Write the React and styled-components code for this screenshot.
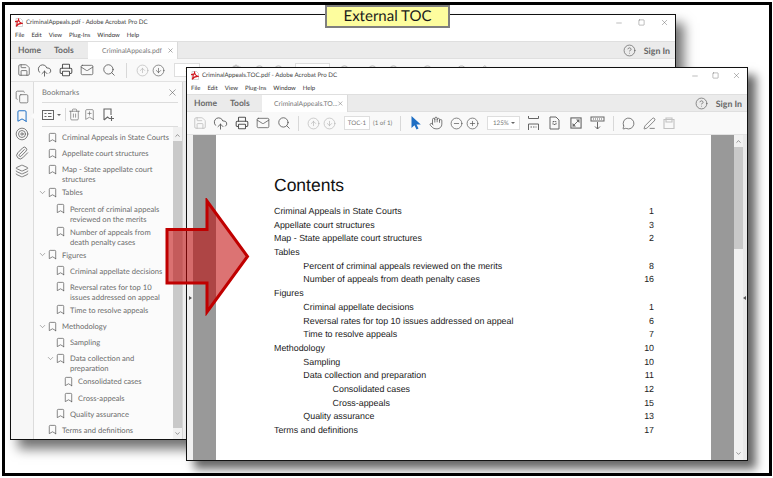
import React from 'react'
import styled, { createGlobalStyle } from 'styled-components'
import {
    Save, CloudUpload, Printer, Mail, Search, CircleArrowUp, CircleArrowDown, Hand, CircleMinus, CirclePlus,
    MessageCircle, PenLine, CircleHelp, X, Minus, Square, Copy, Bookmark, Target, Paperclip, Layers,
    Trash2, ChevronDown, ChevronUp, BookmarkPlus,
} from 'lucide-react'

// the bookmark tree
const bookmarks = [
    { level: 0, text: 'Criminal Appeals in State Courts' },
    { level: 0, text: 'Appellate court structures' },
    { level: 0, text: 'Map - State appellate court structures' },
    { level: 0, text: 'Tables', open: true },
    { level: 1, text: 'Percent of criminal appeals reviewed on the merits' },
    { level: 1, text: 'Number of appeals from death penalty cases' },
    { level: 0, text: 'Figures', open: true },
    { level: 1, text: 'Criminal appellate decisions' },
    { level: 1, text: 'Reversal rates for top 10 issues addressed on appeal' },
    { level: 1, text: 'Time to resolve appeals' },
    { level: 0, text: 'Methodology', open: true },
    { level: 1, text: 'Sampling' },
    { level: 1, text: 'Data collection and preparation', open: true },
    { level: 2, text: 'Consolidated cases' },
    { level: 2, text: 'Cross-appeals' },
    { level: 1, text: 'Quality assurance' },
    { level: 0, text: 'Terms and definitions' },
]

// the table of contents
const contents = [
    { level: 0, text: 'Criminal Appeals in State Courts', page: 1 },
    { level: 0, text: 'Appellate court structures', page: 3 },
    { level: 0, text: 'Map - State appellate court structures', page: 2 },
    { level: 0, text: 'Tables' },
    { level: 1, text: 'Percent of criminal appeals reviewed on the merits', page: 8 },
    { level: 1, text: 'Number of appeals from death penalty cases', page: 16 },
    { level: 0, text: 'Figures' },
    { level: 1, text: 'Criminal appellate decisions', page: 1 },
    { level: 1, text: 'Reversal rates for top 10 issues addressed on appeal', page: 6 },
    { level: 1, text: 'Time to resolve appeals', page: 7 },
    { level: 0, text: 'Methodology', page: 10 },
    { level: 1, text: 'Sampling', page: 10 },
    { level: 1, text: 'Data collection and preparation', page: 11 },
    { level: 2, text: 'Consolidated cases', page: 12 },
    { level: 2, text: 'Cross-appeals', page: 15 },
    { level: 1, text: 'Quality assurance', page: 13 },
    { level: 0, text: 'Terms and definitions', page: 17 },
]

const menus = ['File', 'Edit', 'View', 'Plug-Ins', 'Window', 'Help']

// the little pdf badge in the title bars
const PdfIcon = () => (
    <svg width="8" height="9" viewBox="0 0 8 9">
        <path d="M1 .5h4.5L7.5 2.5v6H1z" fill="#fff" stroke="#b9b9b9" strokeWidth=".6" />
        <path d="M0 3.5c3 .8 4-1 3.4-3 .2 2.6 1.4 4.6 4.4 5-2.6-.4-5 .4-6.6 3 1-2.4 1.2-4 1-5.4z" fill="none" stroke="#d0181f" strokeWidth="1.1" />
    </svg>
)

// the toolbar tools that no package has
const SplitIcon = () => (
    <svg width="13" height="14" viewBox="0 0 13 14" fill="none" stroke="#666" strokeWidth="1">
        <path d="M1.500 0v2.500h10V0M1.500 14v-6h10v6" />
        <path d="M3.500 11h6" strokeDasharray="1.500 1" />
    </svg>
)

const FitPageIcon = () => (
    <svg width="13" height="14" viewBox="0 0 13 14" fill="none" stroke="#666" strokeWidth="1">
        <path d="M2 1h6l3 3v9H2z" />
        <path d="M5 5.500h3v3H5z" strokeDasharray="1.500 .7" />
    </svg>
)

const FullScreenIcon = () => (
    <svg width="12" height="12" viewBox="0 0 13 13" fill="none" stroke="#666" strokeWidth="1.200">
        <rect x="1" y="1" width="11" height="11" />
        <path d="M3 10l7-7" strokeWidth="1" />
        <path d="M6.500 2.800h3.700v3.700zM2.800 6.500v3.700h3.700z" fill="#666" stroke="none" />
    </svg>
)

const ReadModeIcon = () => (
    <svg width="15" height="14" viewBox="0 0 15 14" fill="none" stroke="#666" strokeWidth="1">
        <rect x="1" y="1" width="13" height="4" />
        <path d="M3 3h9" strokeDasharray="1 1" />
        <path d="M7.500 6v7M5 10.500l2.500 2.500 2.500-2.500" />
    </svg>
)

const CursorIcon = () => (
    <svg width="11" height="14" viewBox="0 0 11 14">
        <path d="M1.500 0v12l3-2.800 2 4.300 2-.9-2-4.100h4.300z" fill="#1f6fc4" />
    </svg>
)

const StampIcon = () => (
    <svg width="12" height="13" viewBox="0 0 12 13" fill="none" stroke="#c2c2c2" strokeWidth="1.100">
        <path d="M1 2.500h10v9H1zM3 1h6v4H3z" />
    </svg>
)

const OptionsIcon = () => (
    <svg width="12" height="10" viewBox="0 0 12 10" fill="none" stroke="#666" strokeWidth="1">
        <rect x=".5" y=".5" width="11" height="9" />
        <path d="M2.500 3.500h2M6 3.500h3.500M2.500 6.500h2M6 6.500h3.500" />
    </svg>
)

const FindBookmarkIcon = () => (
    <svg width="13" height="13" viewBox="0 0 13 13" fill="none" stroke="#666" strokeWidth="1.100">
        <path d="M2 12V1h7v6M2 12l3.500-3 1.500 1.200" />
        <path d="M7 10.500h5M9.500 8v5" />
    </svg>
)

// a bookmark row of the navigation panel
const Entry = ({ level, text, open }) => (
    <Row $level={level}>
        <Chevron>{open && <ChevronDown size={9} strokeWidth={1.4} />}</Chevron>
        <Ribbon><Bookmark size={11} strokeWidth={1.7} /></Ribbon>
        <Label>{text}</Label>
    </Row>
)

// the bars every window starts with
const WindowChrome = ({ title, tab, homeWidth, toolsWidth, tabWidth, tabInset, gap, children }) => (
    <>
        <TitleBar>
            <PdfIcon />
            <Title>{title}</Title>
            <Controls $gap={gap}>
                <Minus size={8} strokeWidth={1.2} />
                <Square size={7} strokeWidth={1.3} />
                <X size={9} strokeWidth={1.1} />
            </Controls>
        </TitleBar>
        <MenuBar>
            {menus.map(menu => <Menu key={menu}>{menu}</Menu>)}
        </MenuBar>
        <TabBar>
            <NavTab $width={homeWidth}>Home</NavTab>
            <NavTab $width={toolsWidth}>Tools</NavTab>
            <DocTab $width={tabWidth} $inset={tabInset}>
                <span>{tab}</span>
                <X size={7} strokeWidth={2} />
            </DocTab>
            <Account>
                <CircleHelp size={13} strokeWidth={1.2} />
                <SignIn>Sign In</SignIn>
            </Account>
        </TabBar>
        {children}
    </>
)

export default function App() {
    return (
        <>
            <Global />
            <Frame>
                <BackWindow>
                    <WindowChrome title="CriminalAppeals.pdf - Adobe Acrobat Pro DC" tab="CriminalAppeals.pdf" homeWidth={36} toolsWidth={41} tabWidth={90} tabInset={14} gap={15}>
                        <BackTools>
                            <Tool><Save size={14} strokeWidth={1.3} /></Tool>
                            <Tool><CloudUpload size={15} strokeWidth={1.4} /></Tool>
                            <Tool><Printer size={14} strokeWidth={1.8} /></Tool>
                            <Tool $width={22}><Mail size={14} strokeWidth={1.3} /></Tool>
                            <Tool $width={22}><Search size={14} strokeWidth={1.4} /></Tool>
                            <Separator $before={6} $after={7} />
                            <Tool $width={16} $dim><CircleArrowUp size={13} strokeWidth={1.2} /></Tool>
                            <Tool $width={16}><CircleArrowDown size={13} strokeWidth={1.2} /></Tool>
                            <PageBox $before={8} $width={26}>1</PageBox>
                            <Tool $before={24} $width={24} $dim><Hand size={12} /></Tool>
                            <Tool $width={22} $dim><CircleMinus size={11} /></Tool>
                            <Tool $width={17} $dim><CirclePlus size={11} /></Tool>
                            <PageBox $before={8} $width={35} />
                            <Tool $before={4} $width={20} $dim><CircleMinus size={11} /></Tool>
                            <Tool $before={8} $width={20} $dim><CircleMinus size={11} /></Tool>
                            <Tool $width={22} $dim><CircleMinus size={11} /></Tool>
                            <Tool $before={12} $width={22} $dim><CircleMinus size={11} /></Tool>
                            <Tool $before={12} $width={22} $dim><MessageCircle size={11} /></Tool>
                            <Tool $width={18} $dim><PenLine size={11} /></Tool>
                        </BackTools>
                        <Workspace>
                            <Rail>
                                <RailIcon><Copy size={14} strokeWidth={1.3} /></RailIcon>
                                <RailIcon $active><Bookmark size={14} strokeWidth={1.7} /></RailIcon>
                                <RailIcon><Target size={14} strokeWidth={1.4} /></RailIcon>
                                <RailIcon><Paperclip size={14} strokeWidth={1.5} /></RailIcon>
                                <RailIcon><Layers size={14} strokeWidth={1.4} /></RailIcon>
                            </Rail>
                            <Panel>
                                <PanelHead>
                                    <PanelTitle>Bookmarks</PanelTitle>
                                    <X size={11} strokeWidth={1.2} />
                                </PanelHead>
                                <PanelTools>
                                    <OptionsIcon />
                                    <Caret />
                                    <Separator $before={2} $after={0} $height={13} />
                                    <Trash2 size={13} strokeWidth={1.2} />
                                    <BookmarkPlus size={13} strokeWidth={1.2} />
                                    <FindBookmarkIcon />
                                </PanelTools>
                                <Tree>
                                    <Entries>
                                        {bookmarks.map(item => <Entry key={item.text} {...item} />)}
                                    </Entries>
                                    <Scroller $top={5} $bottom={2}>
                                        <ChevronUp size={7} strokeWidth={2} />
                                        <Thumb $flex />
                                        <ChevronDown size={7} strokeWidth={2} />
                                    </Scroller>
                                </Tree>
                            </Panel>
                            <Gutter />
                        </Workspace>
                    </WindowChrome>
                </BackWindow>

                <FrontWindow>
                    <WindowChrome title="CriminalAppeals.TOC.pdf - Adobe Acrobat Pro DC" tab="CriminalAppeals.TO..." homeWidth={36} toolsWidth={39} tabWidth={86} tabInset={12} gap={13}>
                        <FrontTools>
                            <Tool $dim><Save size={14} strokeWidth={1.2} /></Tool>
                            <Tool><CloudUpload size={15} strokeWidth={1.4} /></Tool>
                            <Tool><Printer size={14} strokeWidth={1.8} /></Tool>
                            <Tool><Mail size={14} strokeWidth={1.3} /></Tool>
                            <Tool><Search size={14} strokeWidth={1.4} /></Tool>
                            <Separator $before={4} $after={6} />
                            <Tool $width={16} $dim><CircleArrowUp size={13} strokeWidth={1.2} /></Tool>
                            <Tool $width={16} $dim><CircleArrowDown size={13} strokeWidth={1.2} /></Tool>
                            <PageBox $before={7} $width={26}>TOC-1</PageBox>
                            <PageCount>(1 of 1)</PageCount>
                            <Separator $before={9} $after={4} />
                            <Tool><CursorIcon /></Tool>
                            <Tool $width={20}><Hand size={14} strokeWidth={1.3} /></Tool>
                            <Tool $before={2} $width={16}><CircleMinus size={13} strokeWidth={1.3} /></Tool>
                            <Tool $width={16}><CirclePlus size={13} strokeWidth={1.3} /></Tool>
                            <ZoomBox $before={7} $width={33}>125%<Caret /></ZoomBox>
                            <Tool $before={3}><SplitIcon /></Tool>
                            <Tool><FitPageIcon /></Tool>
                            <Tool $width={22}><FullScreenIcon /></Tool>
                            <Tool><ReadModeIcon /></Tool>
                            <Separator $before={5} $after={4} />
                            <Tool><MessageCircle size={13} strokeWidth={1.4} /></Tool>
                            <Tool><PenLine size={13} strokeWidth={1.3} /></Tool>
                            <Tool $width={18}><StampIcon /></Tool>
                        </FrontTools>
                        <Viewer>
                            <LeftStrip />
                            <Pasteboard />
                            <Page>
                                <Heading>Contents</Heading>
                                {contents.map(({ level, text, page }) => (
                                    <Line key={text} $level={level}>
                                        <span>{text}</span>
                                        <span>{page}</span>
                                    </Line>
                                ))}
                            </Page>
                            <Pasteboard />
                            <Scroller $top={3} $bottom={3}>
                                <ChevronUp size={7} strokeWidth={2} />
                                <Thumb $height={102} />
                                <Spring />
                                <ChevronDown size={7} strokeWidth={2} />
                            </Scroller>
                            <RightStrip />
                            <Handle $side="left" />
                            <Handle $side="right" />
                        </Viewer>
                    </WindowChrome>
                </FrontWindow>

                <Callout>External TOC</Callout>

                <Arrow viewBox="0 0 90 118" width="90" height="118">
                    <path d="M2 31.500h40V3l40.500 55.500L42 114V85H2z" fill="#c00000" fillOpacity=".55" stroke="#c00000" strokeWidth="3" />
                </Arrow>
            </Frame>
        </>
    )
}

const Global = createGlobalStyle`
    html, body {
        margin: 0;
        background: #fff;
        text-rendering: geometricPrecision;
    }
`

// the picture's black frame
const Frame = styled.div`
    position: relative;
    box-sizing: border-box;
    width: 770px;
    height: 474px;
    margin: 2px 0 0 2px;
    border: 3px solid #000;
    background: #fff;
    overflow: hidden;
    font-family: Lato, sans-serif;
`

// the windows lie free on the canvas
const Window = styled.div`
    position: absolute;
    box-sizing: border-box;
    display: flex;
    flex-direction: column;
    border: 1.5px solid #111;
    background: #fff;
`

const BackWindow = styled(Window)`
    left: 5px;
    top: 9px;
    width: 666px;
    height: 426px;
    box-shadow: 8px 9px 11px rgba(0, 0, 0, 0.55);
`

const FrontWindow = styled(Window)`
    left: 181px;
    top: 62px;
    width: 562px;
    height: 394px;
    box-shadow: 8px 8px 9px rgba(0, 0, 0, 0.6);
`

const TitleBar = styled.div`
    display: flex;
    align-items: center;
    flex: none;
    height: 15px;
    padding-left: 4px;
`

const Title = styled.span`
    margin-left: 3px;
    font-size: 6.200px;
    color: #444;
`

const Controls = styled.div`
    display: flex;
    align-items: center;
    gap: ${props => props.$gap}px;
    margin-left: auto;
    padding-right: 6.500px;
    color: #555;
`

const MenuBar = styled.div`
    display: flex;
    align-items: center;
    flex: none;
    gap: 7px;
    height: 11px;
    padding-left: 4px;
`

const Menu = styled.span`
    font-size: 6px;
    color: #333;
`

const TabBar = styled.div`
    display: flex;
    align-items: stretch;
    flex: none;
    height: 18px;
    background: #ebebeb;
    border-top: 1px solid #dfdfdf;
    border-bottom: 1px solid #dfdfdf;
    box-sizing: border-box;
`

const NavTab = styled.div`
    display: flex;
    align-items: center;
    width: ${props => props.$width}px;
    padding-left: 7px;
    box-sizing: border-box;
    font-size: 8.500px;
    font-weight: 700;
    color: #6a6a6a;
`

const DocTab = styled.div`
    display: flex;
    align-items: center;
    justify-content: space-between;
    box-sizing: border-box;
    width: ${props => props.$width}px;
    padding: 0 3px 0 ${props => props.$inset}px;
    margin-bottom: -1px;
    background: #fff;
    border-right: 1px solid #dadada;
    font-size: 6.800px;
    color: #777;
`

const Account = styled.div`
    display: flex;
    align-items: center;
    gap: 8px;
    margin-left: auto;
    padding-right: 5px;
    color: #555;
`

const SignIn = styled.span`
    font-size: 8.800px;
    font-weight: 700;
    color: #666;
`

const Toolbar = styled.div`
    display: flex;
    align-items: center;
    flex: none;
    box-sizing: border-box;
    padding-left: 2px;
    background: #f9f9f9;
    border-bottom: 1px solid #e2e2e2;
    color: #555;
`

const BackTools = styled(Toolbar)`
    height: 23px;
`

const FrontTools = styled(Toolbar)`
    height: 23px;
`

const Tool = styled.div`
    display: flex;
    align-items: center;
    justify-content: center;
    flex: none;
    width: ${props => props.$width || 21}px;
    margin-left: ${props => props.$before || 0}px;
    color: ${props => props.$dim ? '#b4b4b4' : '#555'};
`

const Separator = styled.div`
    flex: none;
    width: 1px;
    height: ${props => props.$height || 15}px;
    margin-left: ${props => props.$before}px;
    margin-right: ${props => props.$after}px;
    background: #d8d8d8;
`

const PageBox = styled.div`
    display: flex;
    align-items: center;
    justify-content: center;
    flex: none;
    box-sizing: border-box;
    width: ${props => props.$width}px;
    height: 14px;
    margin-left: ${props => props.$before}px;
    background: #fff;
    border: 1px solid #dedede;
    font-size: 6.200px;
    color: #777;
`

const ZoomBox = styled(PageBox)`
    justify-content: space-between;
    padding: 0 4px 0 5px;
`

const PageCount = styled.span`
    flex: none;
    width: 18px;
    margin-left: 3px;
    font-size: 6.200px;
    white-space: nowrap;
    color: #777;
`

const Caret = styled.span`
    display: inline-block;
    margin-left: 1px;
    border-left: 2px solid transparent;
    border-right: 2px solid transparent;
    border-top: 2px solid #666;
`

const Workspace = styled.div`
    display: flex;
    flex: 1;
    min-height: 0;
`

const Rail = styled.div`
    display: flex;
    flex-direction: column;
    align-items: center;
    flex: none;
    gap: 4.500px;
    box-sizing: border-box;
    width: 23px;
    padding-top: 8px;
    background: #f7f7f7;
    border-right: 1px solid #dcdcdc;
`

const RailIcon = styled.div`
    position: relative;
    display: flex;
    justify-content: center;
    width: 100%;
    height: 14px;
    color: ${props => props.$active ? '#1f6fc4' : '#666'};
    ${props => props.$active && `
        &::after {
            content: "";
            position: absolute;
            right: -1px;
            top: 4px;
            border-top: 3px solid transparent;
            border-bottom: 3px solid transparent;
            border-right: 3px solid #fbfbfb;
        }
    `}
`

const Panel = styled.div`
    display: flex;
    flex-direction: column;
    flex: none;
    width: 148px;
    background: #fbfbfb;
`

const PanelHead = styled.div`
    display: flex;
    align-items: center;
    justify-content: space-between;
    flex: none;
    height: 20px;
    margin: 0 4px 0 8px;
    border-bottom: 1px solid #dcdcdc;
    color: #555;
`

const PanelTitle = styled.span`
    font-size: 7.600px;
    color: #777;
`

const PanelTools = styled.div`
    display: flex;
    align-items: center;
    flex: none;
    gap: 2px;
    height: 23px;
    margin: 0 4px 0 8px;
    border-bottom: 1px solid #dcdcdc;
    color: #666;
    & > svg:last-child { margin-left: 4px; }
`

const Tree = styled.div`
    display: flex;
    flex: 1;
    min-height: 0;
    overflow: hidden;
`

const Entries = styled.div`
    flex: 1;
    min-width: 0;
    padding-top: 2px;
`

const Row = styled.div`
    display: flex;
    align-items: flex-start;
    box-sizing: border-box;
    min-height: 16.180px;
    padding: 3px ${props => props.$level ? 8 : 0}px 0 ${props => 3 + props.$level * 8}px;
`

const Chevron = styled.span`
    display: flex;
    align-items: center;
    justify-content: center;
    flex: none;
    width: 10px;
    height: 10px;
    color: #666;
`

const Ribbon = styled.span`
    display: flex;
    align-items: center;
    justify-content: center;
    flex: none;
    width: 11px;
    height: 10px;
    color: #666;
`

const Label = styled.span`
    margin-left: 4px;
    font-size: 7.600px;
    line-height: 10px;
    color: #6c6c6c;
`

const Scroller = styled.div`
    display: flex;
    flex-direction: column;
    align-items: center;
    flex: none;
    box-sizing: border-box;
    width: 9px;
    padding: ${props => props.$top}px 0 ${props => props.$bottom}px;
    background: #f1f1f1;
    color: #555;
`

const Thumb = styled.div`
    width: 100%;
    margin: 2px 0;
    background: #c9c9c9;
    flex: ${props => props.$flex ? 1 : 'none'};
    height: ${props => props.$height ? `${props.$height}px` : 'auto'};
`

const Spring = styled.div`
    flex: 1;
`

const Gutter = styled.div`
    flex: 1;
    background: #eee;
    border-left: 1px solid #d6d6d6;
`

const Viewer = styled.div`
    position: relative;
    display: flex;
    flex: 1;
    min-height: 0;
    background: #fff;
`

const LeftStrip = styled.div`
    flex: none;
    width: 6px;
    background: #f0f0f0;
`

const RightStrip = styled.div`
    flex: 1;
    background: #e9e9e9;
`

const Pasteboard = styled.div`
    flex: none;
    width: 23px;
    background: #999;
`

const Page = styled.div`
    flex: none;
    box-sizing: border-box;
    width: 495px;
    padding: 38px 0 0 58px;
    background: #fff;
    font-family: "Liberation Sans", Arial, sans-serif;
    color: #222;
`

const Heading = styled.div`
    height: 32px;
    font-size: 17.500px;
    line-height: 24px;
    color: #111;
`

const Line = styled.div`
    display: flex;
    justify-content: space-between;
    height: 13.690px;
    width: 380px;
    padding-left: ${props => props.$level * 29.3}px;
    box-sizing: border-box;
    font-size: 8.900px;
    line-height: 13.690px;
`

const Handle = styled.span`
    position: absolute;
    top: 161px;
    ${props => props.$side === 'left' ? 'left: 2px;' : 'right: 1px;'}
    border-top: 2.500px solid transparent;
    border-bottom: 2.500px solid transparent;
    ${props => props.$side === 'left' ? 'border-left: 3px solid #555;' : 'border-right: 3px solid #555;'}
`

// the labels over the picture
const Callout = styled.div`
    position: absolute;
    left: 320px;
    top: 0;
    box-sizing: border-box;
    width: 125px;
    height: 23px;
    background: #fdfd9e;
    border: 2px solid #7f7f7f;
    text-align: center;
    font-family: Lato, sans-serif;
    font-size: 15px;
    line-height: 19px;
    color: #1a1a1a;
`

const Arrow = styled.svg`
    position: absolute;
    left: 160px;
    top: 193px;
`
